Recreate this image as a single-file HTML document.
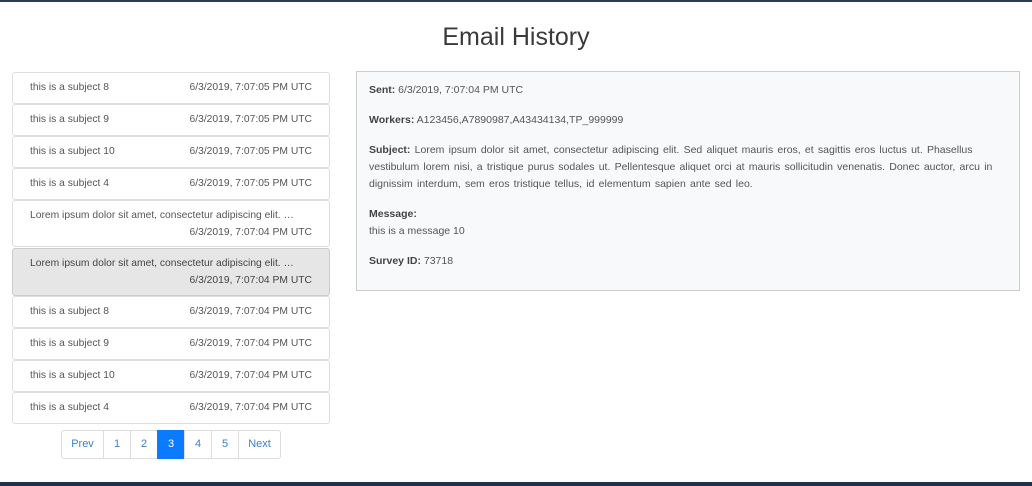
<!DOCTYPE html>
<html><head><style>
*{box-sizing:border-box;margin:0;padding:0}
body{width:1032px;height:486px;overflow:hidden;background:#fff;font-family:"Liberation Sans",sans-serif;color:#555;position:relative}
.top{position:absolute;left:0;top:0;width:1032px;height:2px;background:#2a3b5c}
.bot{position:absolute;left:0;top:482px;width:1032px;height:4px;background:#1f2f52}
h1{position:absolute;top:23px;left:0;width:1032px;text-align:center;font-weight:normal;font-size:25px;color:#3a3a3a}
.row{position:absolute;left:12px;width:318px;border:1px solid #ddd;border-radius:3px;font-size:10.3px;color:#555;background:#fff}
.row .s{position:absolute;left:17px}
.row .d{position:absolute;right:17px}
.sel{background:#e6e6e6;border-color:#ccc}
.pg{position:absolute;top:430px;height:29px;border:1px solid #ddd;font-size:11px;color:#3a7fd0;text-align:center;line-height:27px}
.act{background:#0a7bff;color:#fff;border-color:#0a7bff}
.box{position:absolute;left:356px;top:71px;width:664px;height:220px;border:1px solid #ccc;background:#f8f9fa;padding:10px 12px;font-size:10.5px;line-height:17px;color:#555}
.box b{color:#444}
.box p{margin-bottom:13px}
.sub{word-spacing:1.3px}
</style></head><body>
<div class="top"></div>
<h1>Email History</h1>
<div class="row" style="top:72px;height:32px"><span class="s" style="top:9px">this is a subject 8</span><span class="d" style="top:9px">6/3/2019, 7:07:05 PM UTC</span></div>
<div class="row" style="top:104px;height:32px"><span class="s" style="top:9px">this is a subject 9</span><span class="d" style="top:9px">6/3/2019, 7:07:05 PM UTC</span></div>
<div class="row" style="top:136px;height:32px"><span class="s" style="top:9px">this is a subject 10</span><span class="d" style="top:9px">6/3/2019, 7:07:05 PM UTC</span></div>
<div class="row" style="top:168px;height:32px"><span class="s" style="top:9px">this is a subject 4</span><span class="d" style="top:9px">6/3/2019, 7:07:05 PM UTC</span></div>
<div class="row" style="top:200px;height:47px"><span class="s" style="top:9px">Lorem ipsum dolor sit amet, consectetur adipiscing elit. …</span><span class="d" style="top:26px">6/3/2019, 7:07:04 PM UTC</span></div>
<div class="row sel" style="top:248px;height:48px"><span class="s" style="top:9px;color:#444">Lorem ipsum dolor sit amet, consectetur adipiscing elit. …</span><span class="d" style="top:26px;color:#444">6/3/2019, 7:07:04 PM UTC</span></div>
<div class="row" style="top:296px;height:32px"><span class="s" style="top:9px">this is a subject 8</span><span class="d" style="top:9px">6/3/2019, 7:07:04 PM UTC</span></div>
<div class="row" style="top:328px;height:32px"><span class="s" style="top:9px">this is a subject 9</span><span class="d" style="top:9px">6/3/2019, 7:07:04 PM UTC</span></div>
<div class="row" style="top:360px;height:32px"><span class="s" style="top:9px">this is a subject 10</span><span class="d" style="top:9px">6/3/2019, 7:07:04 PM UTC</span></div>
<div class="row" style="top:392px;height:32px"><span class="s" style="top:9px">this is a subject 4</span><span class="d" style="top:9px">6/3/2019, 7:07:04 PM UTC</span></div>
<div class="pg" style="left:61px;width:43px;border-radius:3px 0 0 3px">Prev</div>
<div class="pg" style="left:103px;width:28px">1</div>
<div class="pg" style="left:130px;width:28px">2</div>
<div class="pg act" style="left:157px;width:28px">3</div>
<div class="pg" style="left:184px;width:28px">4</div>
<div class="pg" style="left:211px;width:28px">5</div>
<div class="pg" style="left:238px;width:43px;border-radius:0 3px 3px 0">Next</div>
<div class="box">
<p><b>Sent:</b> 6/3/2019, 7:07:04 PM UTC</p>
<p><b>Workers:</b> A123456,A7890987,A43434134,TP_999999</p>
<p class="sub"><b>Subject:</b> Lorem ipsum dolor sit amet, consectetur adipiscing elit. Sed aliquet mauris eros, et sagittis eros luctus ut. Phasellus<br>vestibulum lorem nisi, a tristique purus sodales ut. Pellentesque aliquet orci at mauris sollicitudin venenatis. Donec auctor, arcu in<br>dignissim interdum, sem eros tristique tellus, id elementum sapien ante sed leo.</p>
<p><b>Message:</b><br>this is a message 10</p>
<p><b>Survey ID:</b> 73718</p>
</div>
<div class="bot"></div>
</body></html>
